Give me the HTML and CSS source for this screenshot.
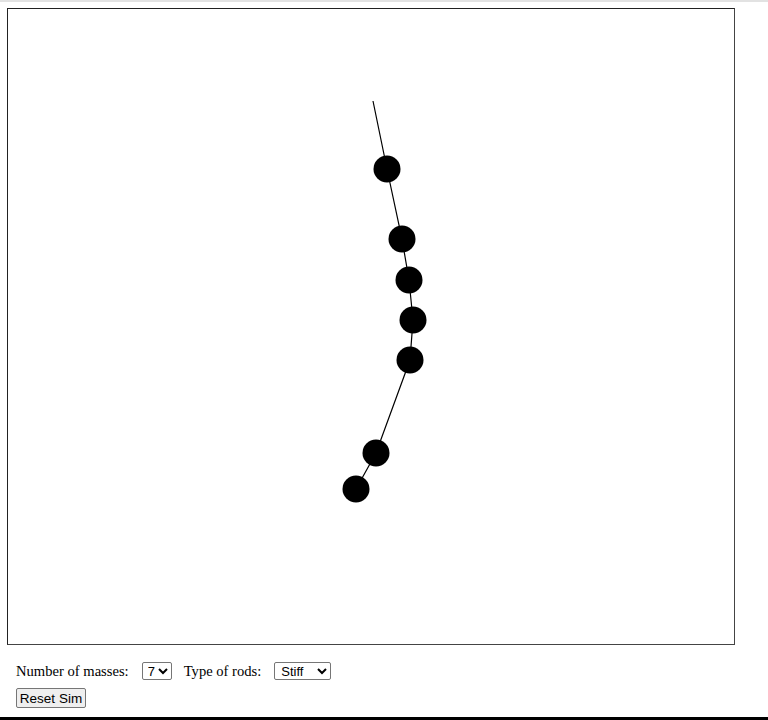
FILE: index.html
```html
<!DOCTYPE html>
<html>
<head>
<meta charset="utf-8">
<link rel="stylesheet" href="styles.css">
</head>
<body>
<div class="topline"></div>
<div class="page">
  <div class="stage">
    <svg class="sim" width="726" height="635" viewBox="7 8 726 635">
      <polyline points="372,100 386,168 401,238 408,279 412,319 409,359 375,452 355,488" fill="none" stroke="#000" stroke-width="1.2"/>
      <g fill="#000">
        <circle cx="386" cy="168" r="13.5"/>
        <circle cx="401" cy="238" r="13.5"/>
        <circle cx="408" cy="279" r="13.5"/>
        <circle cx="412" cy="319" r="13.5"/>
        <circle cx="409" cy="359" r="13.5"/>
        <circle cx="375" cy="452" r="13.5"/>
        <circle cx="355" cy="488" r="13.5"/>
      </g>
    </svg>
  </div>
  <div class="controls">
    <div class="row">
      <label class="lbl">Number of masses:</label>
      <select class="sel sel-n"><option>7</option></select>
      <label class="lbl lbl2">Type of rods:</label>
      <select class="sel sel-r"><option>Stiff</option></select>
    </div>
    <div class="row row2">
      <button class="btn">Reset Sim</button>
    </div>
  </div>
</div>
<div class="bottombar"></div>
</body>
</html>
```
FILE: styles.css
```css
html, body {
  margin: 0;
  padding: 0;
  background: #fff;
  width: 768px;
  height: 720px;
  overflow: hidden;
  position: relative;
  font-family: "Liberation Serif", "Times New Roman", serif;
}
.topline {
  height: 2px;
  background: #e2e2e2;
}
.page {
  padding: 6px 0 0 7px;
}
.stage {
  width: 726px;
  height: 635px;
  border: 1px solid #222;
  border-right-color: #444;
  border-bottom-color: #444;
  background: #fff;
}
.sim {
  display: block;
}
.controls {
  padding: 17px 0 0 9px;
}
.row {
  display: flex;
  align-items: center;
  height: 18px;
  font-size: 14.6px;
  color: #000;
}
.lbl {
  margin-right: 13px;
}
.lbl2 {
  margin-left: 12px;
  margin-right: 13px;
}
.sel {
  font-family: "Liberation Sans", Arial, sans-serif;
  font-size: 13px;
  height: 18px;
  padding: 0 0 0 2px;
  border: 1px solid #767676;
  border-radius: 2px;
  background: #fff;
  color: #000;
}
.sel-n { width: 30px; padding-left: 1px; }
.sel-r { width: 57px; }
.row2 {
  margin-top: 8px;
  height: 20px;
}
.btn {
  font-family: "Liberation Sans", Arial, sans-serif;
  font-size: 13.5px;
  width: 70px;
  height: 20px;
  padding: 0;
  border: 1px solid #767676;
  border-radius: 2px;
  background: #efefef;
  color: #000;
}
.bottombar {
  position: absolute;
  left: 0;
  right: 0;
  bottom: 0;
  height: 3px;
  background: #000;
}
```
